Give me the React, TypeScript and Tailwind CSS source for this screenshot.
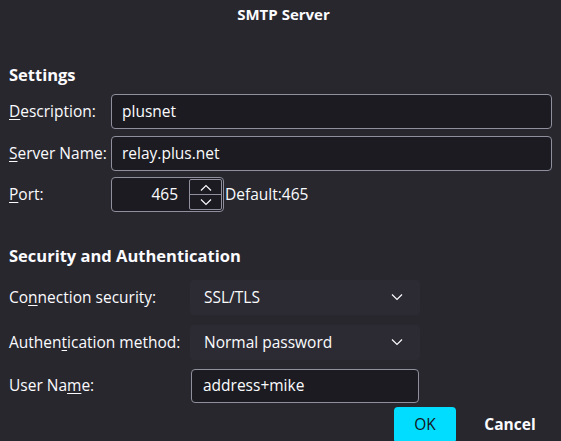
import React from "react";

const Chevron = ({ up = false, className = "" }: { up?: boolean; className?: string }) => (
  <svg width="12" height="7" viewBox="0 0 12 7" className={className} fill="none" stroke="currentColor" strokeWidth="1.2">
    {up ? <path d="M1 6.5 L6 1.5 L11 6.5" /> : <path d="M1 0.5 L6 5.5 L11 0.5" />}
  </svg>
);

const U = ({ children }: { children: React.ReactNode }) => <span className="underline underline-offset-2">{children}</span>;

export default function App() {
  return (
    <div className="w-[561px] h-[441px] overflow-hidden bg-[#28272e] text-[#fbfbfe] text-[15.5px] leading-none" style={{ fontFamily: '"Open Sans", "Noto Sans", sans-serif' }}>
      <div className="h-[28px] flex items-center justify-center font-bold text-[15px] pl-[6px]">SMTP Server</div>
      <div className="px-[9px]">
        <div className="mt-[38px] h-[18px] flex items-center font-bold text-[16.5px]">Settings</div>
        <div className="mt-[10px] flex flex-col gap-[7px]">
          <div className="flex items-center h-[35px]">
            <div className="w-[102px]"><U>D</U>escription:</div>
            <div className="flex-1 h-full flex items-center px-[10px] bg-[#1c1b22] border border-[#8f8f9d] rounded-[4px]">plusnet</div>
          </div>
          <div className="flex items-center h-[35px]">
            <div className="w-[102px]"><U>S</U>erver Name:</div>
            <div className="flex-1 h-full flex items-center px-[10px] bg-[#1c1b22] border border-[#8f8f9d] rounded-[4px]">relay.plus.net</div>
          </div>
          <div className="flex items-center h-[35px] -mt-[1px]">
            <div className="w-[102px]"><U>P</U>ort:</div>
            <div className="w-[113px] h-full flex items-center bg-[#1c1b22] border border-[#8f8f9d] rounded-[4px]">
              <div className="flex-1 text-right pr-[11px]">465</div>
              <div className="w-[33px] h-[31px] mr-[1px] flex flex-col border border-[#8f8f9d] rounded-[2px]">
                <div className="flex-1 flex items-center justify-center border-b border-[#8f8f9d]"><Chevron up /></div>
                <div className="flex-1 flex items-center justify-center"><Chevron /></div>
              </div>
            </div>
            <div className="ml-[1px]">Default:465</div>
          </div>
        </div>
        <div className="mt-[35px] h-[18px] flex items-center font-bold text-[16.5px]">Security and Authentication</div>
        <div className="mt-[15px] flex flex-col gap-[10px]">
          <div className="flex items-center h-[35px]">
            <div className="w-[181px]">Co<U>n</U>nection security:</div>
            <div className="w-[230px] h-full flex items-center justify-between pl-[14px] pr-[17px] bg-[#2c2b33] rounded-[4px]">
              <span>SSL/TLS</span>
              <Chevron />
            </div>
          </div>
          <div className="flex items-center h-[35px]">
            <div className="w-[181px]">Authen<U>t</U>ication method:</div>
            <div className="w-[230px] h-full flex items-center justify-between pl-[14px] pr-[17px] bg-[#2c2b33] rounded-[4px]">
              <span>Normal password</span>
              <Chevron />
            </div>
          </div>
          <div className="flex items-center h-[34px] -mt-[1px]">
            <div className="w-[182px]">User Na<U>m</U>e:</div>
            <div className="w-[228px] h-full flex items-center px-[11px] bg-[#1c1b22] border border-[#8f8f9d] rounded-[4px]">address+mike</div>
          </div>
        </div>
        <div className="mt-[4px] flex justify-end gap-[12px]">
          <div className="w-[62px] h-[36px] flex items-center justify-center bg-[#00ddff] text-[#15141a] rounded-[4px]">OK</div>
          <div className="w-[84px] h-[36px] flex items-center justify-center font-bold">Cancel</div>
        </div>
      </div>
    </div>
  );
}
